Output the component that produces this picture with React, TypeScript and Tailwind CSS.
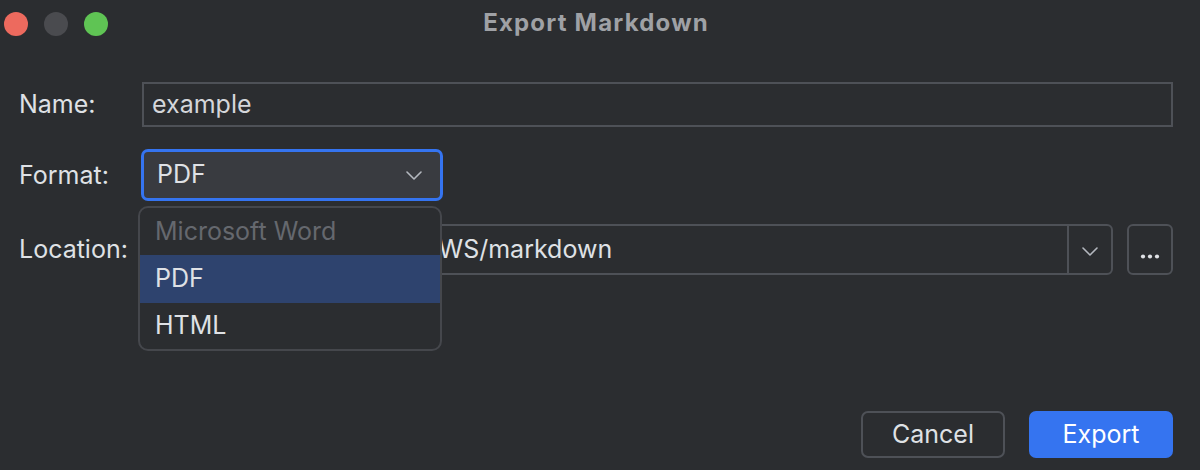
function Chevron({ className }: { className?: string }) {
  return (
    <svg width="16" height="9" viewBox="0 0 16 9" fill="none" className={className}>
      <path d="M1 1l7 7 7-7" stroke="#b4b8bf" strokeWidth="1.6" strokeLinecap="round" strokeLinejoin="round" />
    </svg>
  )
}

export default function App() {
  return (
    <div
      className="w-[1200px] h-[470px] bg-[#2b2d30] text-[#dfe1e5] flex flex-col overflow-hidden select-none"
      style={{ fontFamily: "Inter, 'Noto Sans', sans-serif" }}
    >
      {/* title bar */}
      <div className="relative h-12 flex items-center px-1 shrink-0">
        <div className="flex gap-4">
          <span className="w-6 h-6 rounded-full bg-[#ed6a5e]" />
          <span className="w-6 h-6 rounded-full bg-[#4a4b4f]" />
          <span className="w-6 h-6 rounded-full bg-[#5fc454]" />
        </div>
        <div className="absolute inset-0 flex items-center justify-center pb-[2px] pr-[8px] pointer-events-none">
          <span className="text-[24px] font-bold text-[#9fa1a5] tracking-[1.2px]">Export Markdown</span>
        </div>
      </div>

      {/* form */}
      <div className="flex-1 flex flex-col pl-[19px] pr-[27px] pt-[34px] text-[25px]">
        <div className="flex items-center h-[45px]">
          <span className="w-[123px]">Name:</span>
          <div className="flex-1 h-[45px] border-2 border-[#4e5157] flex items-center px-[8px] text-[#d4d6da]">
            example
          </div>
        </div>

        <div className="flex items-center h-[52px] mt-[22px]">
          <span className="w-[122px] pt-[2px]">Format:</span>
          <div className="relative w-[302px] h-[52px]">
            <div className="w-full h-full rounded-[7px] border-[3px] border-[#3574f0] bg-[#393b40] flex items-center justify-between pl-[13px] pr-[18px]">
              <span>PDF</span>
              <Chevron />
            </div>
            {/* open popup */}
            <div className="absolute left-[-3px] top-[57px] w-[304px] z-10 rounded-[10px] border-2 border-[#45474c] bg-[#2b2d30] overflow-hidden flex flex-col">
              <div className="h-[47px] flex items-center px-[15px] text-[#65686e]">Microsoft Word</div>
              <div className="h-[48px] flex items-center px-[15px] bg-[#2e436e]">PDF</div>
              <div className="h-[46px] flex items-center px-[15px]">HTML</div>
            </div>
          </div>
        </div>

        <div className="flex items-center h-[51px] mt-[23px]">
          <span className="w-[123px]">Location:</span>
          <div className="flex-1 h-[51px] flex gap-[14px]">
            <div className="flex-1 flex border-2 border-[#4e5157] rounded-[6px] overflow-hidden">
              <div className="flex-1 flex items-center pl-[13px] whitespace-nowrap overflow-hidden">
                /Users/dev/Documents/WS/markdown
              </div>
              <div className="w-[44px] border-l-2 border-[#4e5157] flex items-center justify-center pt-[3px]">
                <Chevron />
              </div>
            </div>
            <div className="w-[46px] border-2 border-[#4e5157] rounded-[6px] flex items-end justify-center pb-[14px]">
              <svg width="20" height="5" viewBox="0 0 20 5">
                <circle cx="3" cy="2.5" r="2.1" fill="#dfe1e5" />
                <circle cx="10" cy="2.5" r="2.1" fill="#dfe1e5" />
                <circle cx="17" cy="2.5" r="2.1" fill="#dfe1e5" />
              </svg>
            </div>
          </div>
        </div>

        <div className="flex-1" />

        <div className="flex justify-end gap-[24px] pb-[12px]">
          <button className="w-[144px] h-[47px] rounded-[7px] border-2 border-[#4e5157] text-[#dfe1e5]">
            Cancel
          </button>
          <button className="w-[144px] h-[47px] rounded-[7px] bg-[#3574f0] text-white">
            Export
          </button>
        </div>
      </div>
    </div>
  )
}
